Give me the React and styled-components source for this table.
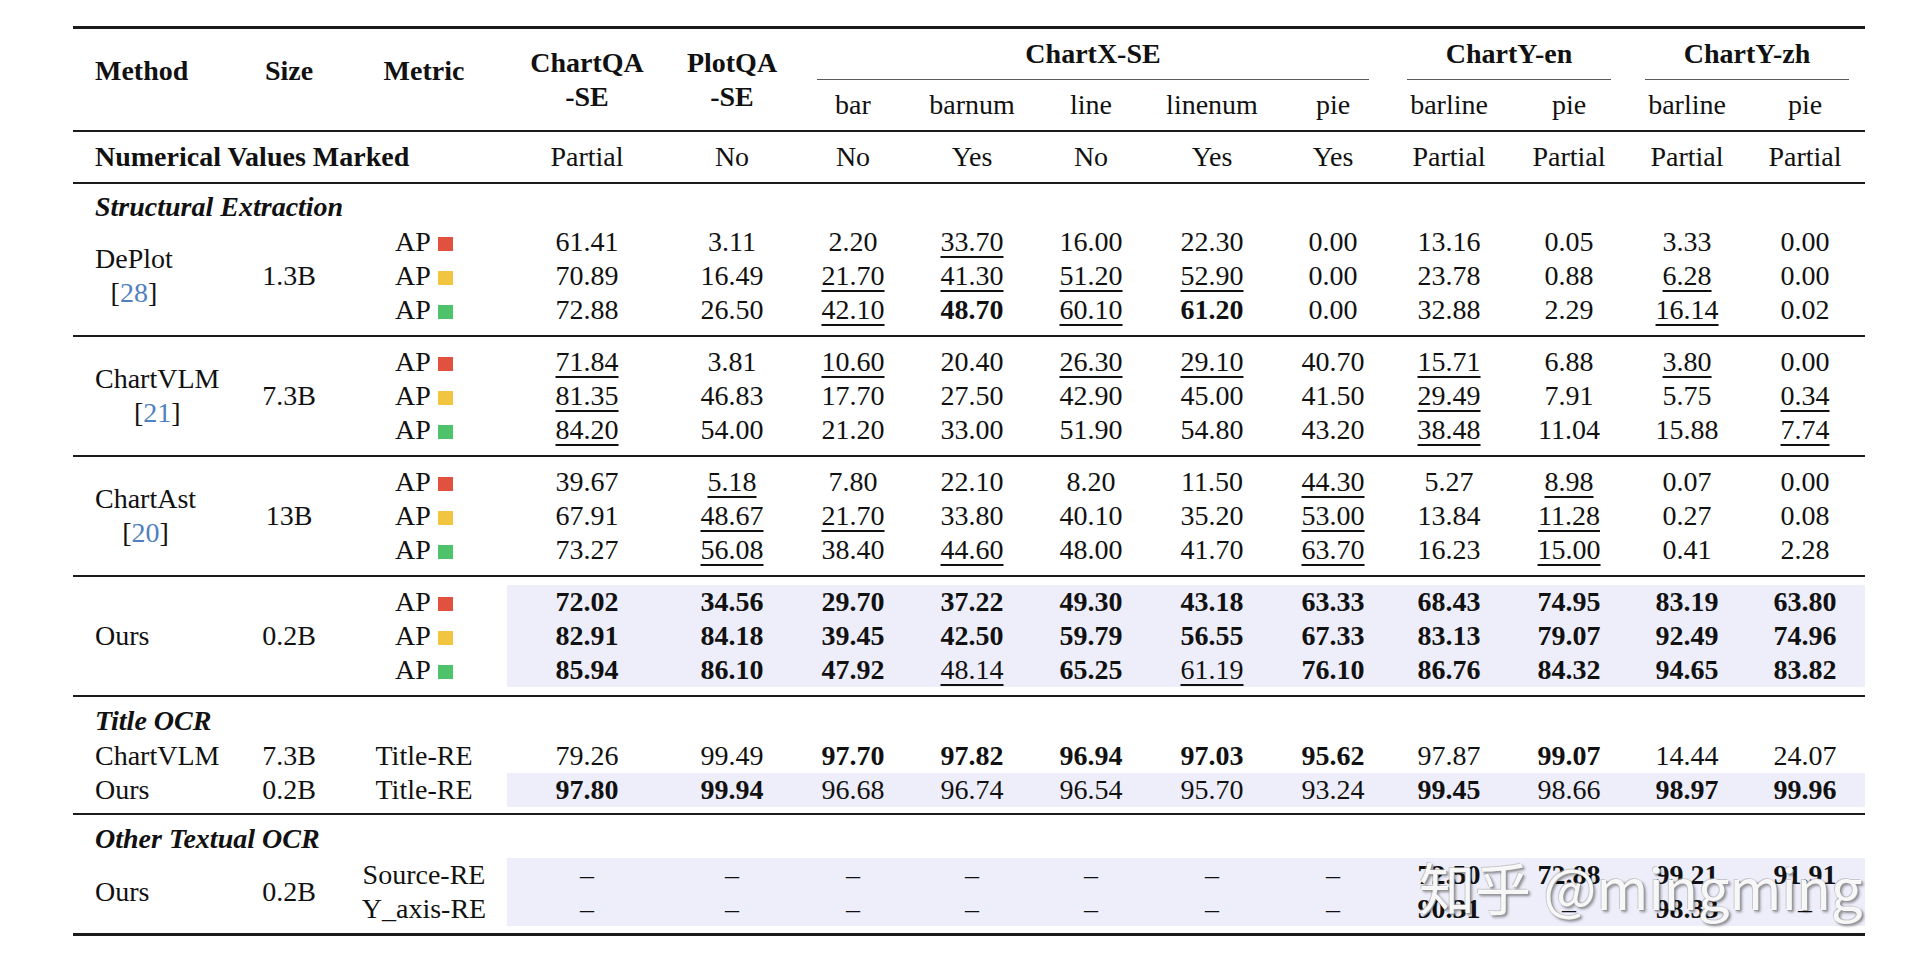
import styled, { createGlobalStyle } from "styled-components";

const GlobalStyle = createGlobalStyle`
  html, body {
    margin: 0;
    padding: 0;
    background: #fff;
  }
  body {
    font-family: "Liberation Serif", "Times New Roman", serif;
    color: #111;
  }
`;

const COLS = [164, 104, 166, 160, 130, 112, 126, 112, 130, 112, 120, 120, 116, 120];
const SWATCH = { r: "#e0513f", y: "#f1c540", g: "#4ec36c" };

const structural = [
  {
    name: "DePlot",
    cite: "28",
    size: "1.3B",
    rows: [
      ["r", "61.41", "3.11", "2.20", "_33.70", "16.00", "22.30", "0.00", "13.16", "0.05", "3.33", "0.00"],
      ["y", "70.89", "16.49", "_21.70", "_41.30", "_51.20", "_52.90", "0.00", "23.78", "0.88", "_6.28", "0.00"],
      ["g", "72.88", "26.50", "_42.10", "*48.70", "_60.10", "*61.20", "0.00", "32.88", "2.29", "_16.14", "0.02"],
    ],
  },
  {
    name: "ChartVLM",
    cite: "21",
    size: "7.3B",
    rows: [
      ["r", "_71.84", "3.81", "_10.60", "20.40", "_26.30", "_29.10", "40.70", "_15.71", "6.88", "_3.80", "0.00"],
      ["y", "_81.35", "46.83", "17.70", "27.50", "42.90", "45.00", "41.50", "_29.49", "7.91", "5.75", "_0.34"],
      ["g", "_84.20", "54.00", "21.20", "33.00", "51.90", "54.80", "43.20", "_38.48", "11.04", "15.88", "_7.74"],
    ],
  },
  {
    name: "ChartAst",
    cite: "20",
    size: "13B",
    rows: [
      ["r", "39.67", "_5.18", "7.80", "22.10", "8.20", "11.50", "_44.30", "5.27", "_8.98", "0.07", "0.00"],
      ["y", "67.91", "_48.67", "_21.70", "33.80", "40.10", "35.20", "_53.00", "13.84", "_11.28", "0.27", "0.08"],
      ["g", "73.27", "_56.08", "38.40", "_44.60", "48.00", "41.70", "_63.70", "16.23", "_15.00", "0.41", "2.28"],
    ],
  },
  {
    name: "Ours",
    size: "0.2B",
    shade: true,
    rows: [
      ["r", "*72.02", "*34.56", "*29.70", "*37.22", "*49.30", "*43.18", "*63.33", "*68.43", "*74.95", "*83.19", "*63.80"],
      ["y", "*82.91", "*84.18", "*39.45", "*42.50", "*59.79", "*56.55", "*67.33", "*83.13", "*79.07", "*92.49", "*74.96"],
      ["g", "*85.94", "*86.10", "*47.92", "_48.14", "*65.25", "_61.19", "*76.10", "*86.76", "*84.32", "*94.65", "*83.82"],
    ],
  },
];

const titleOcr = [
  { name: "ChartVLM", size: "7.3B", metric: "Title-RE", vals: ["79.26", "99.49", "*97.70", "*97.82", "*96.94", "*97.03", "*95.62", "97.87", "*99.07", "14.44", "24.07"] },
  { name: "Ours", size: "0.2B", metric: "Title-RE", shade: true, vals: ["*97.80", "*99.94", "96.68", "96.74", "96.54", "95.70", "93.24", "*99.45", "98.66", "*98.97", "*99.96"] },
];

const D = "–";
const otherOcr = [
  ["Source-RE", D, D, D, D, D, D, D, "*72.50", "*72.88", "*99.21", "*91.91"],
  ["Y_axis-RE", D, D, D, D, D, D, D, "*90.31", D, "*98.33", D],
];

const marked = ["Partial", "No", "No", "Yes", "No", "Yes", "Yes", "Partial", "Partial", "Partial", "Partial"];

const Page = styled.div`
  padding: 26px 0 30px 73px;
`;

const Frame = styled.div`
  position: relative;
  width: 1792px;
`;

const Table = styled.table`
  width: 1792px;
  table-layout: fixed;
  border-collapse: collapse;
  border-top: 3px solid #1b1b1b;
  border-bottom: 3px solid #1b1b1b;
  font-size: 28px;
  line-height: 34px;
`;

const Col = styled.col`
  width: ${(p) => p.$w}px;
`;

const Head = styled.thead`
  border-bottom: 2px solid #1b1b1b;
`;

const Group = styled.tbody`
  border-top: 2px solid #1b1b1b;
`;

const HeadRow = styled.tr`
  height: ${(p) => p.$h}px;
`;

const Th = styled.th`
  padding: ${(p) => (p.$up ? "0 0 18px" : "0")};
  padding-left: ${(p) => (p.$left ? "22px" : "0")};
  font-weight: ${(p) => (p.$light ? 400 : 700)};
  text-align: ${(p) => (p.$left ? "left" : "center")};
  vertical-align: middle;
  white-space: nowrap;
`;

const SpanTh = styled.th`
  padding: 8px ${(p) => p.$trim}px 0;
  font-weight: 700;
  text-align: center;
  vertical-align: bottom;
`;

const SpanLabel = styled.div`
  padding-bottom: 8px;
  border-bottom: 1.5px solid #5a5a5a;
`;

const Row = styled.tr`
  height: ${(p) => p.$h || 34}px;
`;

const Name = styled.td`
  padding: 0 0 0 22px;
  text-align: left;
  vertical-align: middle;
  white-space: nowrap;
  font-weight: ${(p) => (p.$bold ? 700 : 400)};
`;

const NameStack = styled.span`
  display: inline-block;
  text-align: center;
`;

const Cite = styled.span`
  color: #5080bd;
`;

const Plain = styled.td`
  padding: 0;
  text-align: center;
  vertical-align: middle;
  white-space: nowrap;
`;

const Cell = styled.td`
  padding: 0;
  text-align: center;
  vertical-align: middle;
  white-space: nowrap;
  background: ${(p) => (p.$shade ? "#eeeefb" : "transparent")};
`;

const Num = styled.span`
  font-weight: ${(p) => (p.$b ? 700 : 400)};
  text-decoration: ${(p) => (p.$u ? "underline" : "none")};
  text-underline-offset: 5px;
  text-decoration-thickness: 1.5px;
`;

const Swatch = styled.span`
  display: inline-block;
  width: 15px;
  height: 14px;
  margin-left: 7px;
  background: ${(p) => p.$c};
`;

const Section = styled.td`
  padding: ${(p) => p.$pt}px 0 0 22px;
  font-weight: 700;
  font-style: italic;
  text-align: left;
  vertical-align: top;
`;

const Watermark = styled.div`
  position: absolute;
  left: 1346px;
  top: 832px;
  font-family: "Noto Sans CJK SC", "Noto Sans", sans-serif;
  font-size: 56px;
  line-height: 1;
  color: rgba(255, 255, 255, 0.92);
  text-shadow: 1px 1px 0 #9a9a9a, 2px 2px 3px rgba(0, 0, 0, 0.45), -1px -1px 0 rgba(180, 180, 180, 0.6);
  white-space: nowrap;
  pointer-events: none;
`;

const Value = ({ v }) => {
  const b = v.startsWith("*");
  const u = v.startsWith("_");
  return (
    <Num $b={b} $u={u}>
      {b || u ? v.slice(1) : v}
    </Num>
  );
};

const Gap = ({ h }) => (
  <Row $h={h}>
    <td colSpan={14} />
  </Row>
);

const App = () => {
  return (
    <Page>
      <GlobalStyle />
      <Frame>
        <Table>
          <colgroup>
            {COLS.map((w, i) => (
              <Col key={i} $w={w} />
            ))}
          </colgroup>
          <Head>
            <HeadRow $h={51}>
              <Th rowSpan={2} $left $up>Method</Th>
              <Th rowSpan={2} $up>Size</Th>
              <Th rowSpan={2} $up>Metric</Th>
              <Th rowSpan={2}>ChartQA<br />-SE</Th>
              <Th rowSpan={2}>PlotQA<br />-SE</Th>
              <SpanTh colSpan={5} $trim={20}>
                <SpanLabel>ChartX-SE</SpanLabel>
              </SpanTh>
              <SpanTh colSpan={2} $trim={18}>
                <SpanLabel>ChartY-en</SpanLabel>
              </SpanTh>
              <SpanTh colSpan={2} $trim={16}>
                <SpanLabel>ChartY-zh</SpanLabel>
              </SpanTh>
            </HeadRow>
            <HeadRow $h={51}>
              {["bar", "barnum", "line", "linenum", "pie", "barline", "pie", "barline", "pie"].map((t, i) => (
                <Th key={i} $light>{t}</Th>
              ))}
            </HeadRow>
          </Head>

          <Group>
            <Row $h={52}>
              <Name colSpan={3} $bold>Numerical Values Marked</Name>
              {marked.map((m, i) => (
                <Plain key={i}>{m}</Plain>
              ))}
            </Row>
          </Group>

          {structural.map((g, gi) => (
            <Group key={g.name + gi}>
              {gi === 0 ? (
                <Row $h={42}>
                  <Section colSpan={14} $pt={6}>Structural Extraction</Section>
                </Row>
              ) : (
                <Gap h={9} />
              )}
              {g.rows.map((r, ri) => (
                <Row key={ri}>
                  {ri === 0 && (
                    <>
                      <Name rowSpan={3}>
                        <NameStack>
                          {g.name}
                          {g.cite && (
                            <>
                              <br />[<Cite>{g.cite}</Cite>]
                            </>
                          )}
                        </NameStack>
                      </Name>
                      <Plain rowSpan={3}>{g.size}</Plain>
                    </>
                  )}
                  <Plain>
                    AP<Swatch $c={SWATCH[r[0]]} />
                  </Plain>
                  {r.slice(1).map((v, vi) => (
                    <Cell key={vi} $shade={g.shade}>
                      <Value v={v} />
                    </Cell>
                  ))}
                </Row>
              ))}
              <Gap h={9} />
            </Group>
          ))}

          <Group>
            <Row $h={43}>
              <Section colSpan={14} $pt={7}>Title OCR</Section>
            </Row>
            {titleOcr.map((r) => (
              <Row key={r.name}>
                <Name>{r.name}</Name>
                <Plain>{r.size}</Plain>
                <Plain>{r.metric}</Plain>
                {r.vals.map((v, vi) => (
                  <Cell key={vi} $shade={r.shade}>
                    <Value v={v} />
                  </Cell>
                ))}
              </Row>
            ))}
            <Gap h={7} />
          </Group>

          <Group>
            <Row $h={44}>
              <Section colSpan={14} $pt={7}>Other Textual OCR</Section>
            </Row>
            {otherOcr.map((r, ri) => (
              <Row key={r[0]}>
                {ri === 0 && (
                  <>
                    <Name rowSpan={2}>Ours</Name>
                    <Plain rowSpan={2}>0.2B</Plain>
                  </>
                )}
                <Plain>{r[0]}</Plain>
                {r.slice(1).map((v, vi) => (
                  <Cell key={vi} $shade>
                    <Value v={v} />
                  </Cell>
                ))}
              </Row>
            ))}
            <Gap h={8} />
          </Group>
        </Table>
        <Watermark>知乎 @mingming</Watermark>
      </Frame>
    </Page>
  );
};

export default App;
